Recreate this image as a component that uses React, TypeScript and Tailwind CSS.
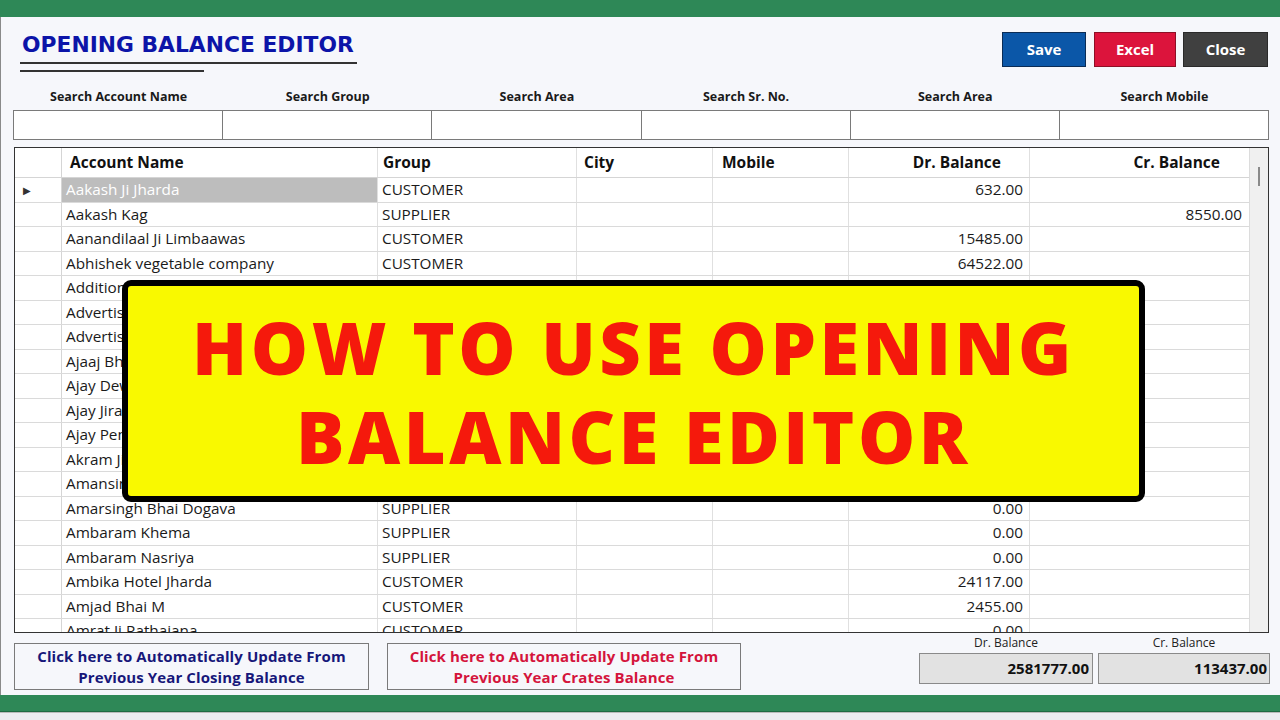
import React from "react";

type Row = {
	name: string;
	group: string;
	dr: string;
	cr: string;
};

const rows: Row[] = [
	{ name: "Aakash Ji Jharda", group: "CUSTOMER", dr: "632.00", cr: "" },
	{ name: "Aakash Kag", group: "SUPPLIER", dr: "", cr: "8550.00" },
	{ name: "Aanandilaal Ji Limbaawas", group: "CUSTOMER", dr: "15485.00", cr: "" },
	{ name: "Abhishek vegetable company", group: "CUSTOMER", dr: "64522.00", cr: "" },
	{ name: "Additional Charges", group: "EXPENSES", dr: "0.00", cr: "" },
	{ name: "Advertisement", group: "EXPENSES", dr: "0.00", cr: "" },
	{ name: "Advertising Exp", group: "EXPENSES", dr: "0.00", cr: "" },
	{ name: "Ajaaj Bhai", group: "CUSTOMER", dr: "0.00", cr: "" },
	{ name: "Ajay Dewasi", group: "CUSTOMER", dr: "0.00", cr: "" },
	{ name: "Ajay Jirawala", group: "CUSTOMER", dr: "0.00", cr: "" },
	{ name: "Ajay Pemawat", group: "CUSTOMER", dr: "0.00", cr: "" },
	{ name: "Akram Ji", group: "SUPPLIER", dr: "0.00", cr: "" },
	{ name: "Amansingh", group: "SUPPLIER", dr: "0.00", cr: "" },
	{ name: "Amarsingh Bhai Dogava", group: "SUPPLIER", dr: "0.00", cr: "" },
	{ name: "Ambaram Khema", group: "SUPPLIER", dr: "0.00", cr: "" },
	{ name: "Ambaram Nasriya", group: "SUPPLIER", dr: "0.00", cr: "" },
	{ name: "Ambika Hotel Jharda", group: "CUSTOMER", dr: "24117.00", cr: "" },
	{ name: "Amjad Bhai M", group: "CUSTOMER", dr: "2455.00", cr: "" },
	{ name: "Amrat Ji Rathajana", group: "CUSTOMER", dr: "0.00", cr: "" },
];

const searches = [
	"Search Account Name",
	"Search Group",
	"Search Area",
	"Search Sr. No.",
	"Search Area",
	"Search Mobile",
];

const cols = "grid grid-cols-[47px_316px_199px_136px_136px_181px_218px]";

export default function App() {
	return (
		<div className="relative w-[1280px] h-[720px] overflow-hidden flex flex-col bg-[#f6f7fb] font-['Open_Sans',sans-serif] text-[#111]">
			<div className="h-[17px] bg-[#2e8857] shrink-0" />

			<div className="flex-1 flex flex-col border-l border-[#8a8a8a] pl-[13px] pr-[10px]">
				{/* header */}
				<div className="flex justify-between items-start h-[70px] pr-[2px]">
					<div className="pl-[8px] pt-[15px]">
						<h1 className="font-['DejaVu_Sans',sans-serif] font-bold text-[21.8px] leading-[26px] text-[#0c14a8]">
							OPENING BALANCE EDITOR
						</h1>
						<div className="mt-[4px] -ml-[2px] w-[337px] h-[1.5px] bg-[#333]" />
						<div className="mt-[6.5px] -ml-[2px] w-[184px] h-[1.5px] bg-[#333]" />
					</div>
					<div className="flex pt-[15px]">
						<button className="w-[84px] h-[35px] bg-[#0b57a8] border border-[#0a2c55] text-white font-bold text-[15px]">
							Save
						</button>
						<button className="ml-[8px] w-[82px] h-[35px] bg-[#dc143c] border border-[#8d1026] text-white font-bold text-[15px]">
							Excel
						</button>
						<button className="ml-[7px] w-[85px] h-[35px] bg-[#404040] border border-[#2a2a2a] text-white font-bold text-[15px]">
							Close
						</button>
					</div>
				</div>

				{/* search */}
				<div className="grid grid-cols-6 w-[1255px]">
					{searches.map((s, i) => (
						<div key={i} className="flex flex-col">
							<div className="h-[23px] text-center font-bold text-[12.5px] leading-[19px] text-[#1a1a1a]">
								{s}
							</div>
							<div className="h-[30px] bg-white border border-[#7a7a7a] -ml-px first:ml-0" />
						</div>
					))}
				</div>

				{/* table */}
				<div className="mt-[7px] w-[1255px] h-[486px] shrink-0 border border-[#333] bg-white flex overflow-hidden">
					<div className="flex-1 flex flex-col overflow-hidden">
						<div className={`${cols} h-[30px] shrink-0 border-b border-[#d5d5d5] font-bold text-[15.5px] text-[#111]`}>
							<div className="border-r border-[#d5d5d5]" />
							<div className="pl-[8px] flex items-center border-r border-[#e0e0e0]">Account Name</div>
							<div className="pl-[5px] flex items-center border-r border-[#e0e0e0]">Group</div>
							<div className="pl-[7px] flex items-center border-r border-[#e0e0e0]">City</div>
							<div className="pl-[9px] flex items-center border-r border-[#e0e0e0]">Mobile</div>
							<div className="pr-[28px] flex items-center justify-end border-r border-[#e0e0e0]">Dr. Balance</div>
							<div className="pr-[28px] flex items-center justify-end">Cr. Balance</div>
						</div>
						{rows.map((r, i) => (
							<div key={i} className={`${cols} h-[24.5px] shrink-0 border-b border-[#dadada] text-[15.3px] leading-[23px] text-[#1a1a1a]`}>
								<div className="border-r border-[#d5d5d5] flex items-center pl-[8px]">
									{i === 0 && <span className="text-[10px] leading-none text-[#333]">▶</span>}
								</div>
								<div className={`pl-[4px] border-r border-[#e0e0e0] whitespace-nowrap overflow-hidden ${i === 0 ? "bg-[#bdbdbd] text-white" : ""}`}>
									{r.name}
								</div>
								<div className="pl-[4px] border-r border-[#e0e0e0]">{r.group}</div>
								<div className="border-r border-[#e0e0e0]" />
								<div className="border-r border-[#e0e0e0]" />
								<div className="pr-[6px] text-right border-r border-[#e0e0e0]">{r.dr}</div>
								<div className="pr-[6px] text-right">{r.cr}</div>
							</div>
						))}
					</div>
					<div className="w-[19px] shrink-0 bg-[#f0f0f0] border-l border-[#dcdcdc] pt-[19px] flex justify-center">
						<div className="w-[2px] h-[19px] bg-[#8a8a8a]" />
					</div>
				</div>

				{/* bottom */}
				<div className="mt-[10px] flex items-start">
					<button className="shrink-0 w-[355px] h-[47px] border border-[#7a7a7a] text-[#17177a] font-bold text-[15px] leading-[21px] tracking-[0.1px]">
						Click here to Automatically Update From
						<br />
						Previous Year Closing Balance
					</button>
					<button className="shrink-0 ml-[18px] w-[354px] h-[47px] border border-[#7a7a7a] text-[#d4143c] font-bold text-[15px] leading-[21px] tracking-[0.1px]">
						Click here to Automatically Update From
						<br />
						Previous Year Crates Balance
					</button>
					<div className="shrink-0 ml-[178px] -mt-[5px] flex gap-[5px]">
						<div className="flex flex-col">
							<div className="h-[15px] text-center text-[12px] leading-[10px] text-[#222]">Dr. Balance</div>
							<div className="w-[174px] h-[31px] bg-[#e2e2e2] border border-[#8a8a8a] text-right pr-[3px] font-bold text-[15px] leading-[29px]">
								2581777.00
							</div>
						</div>
						<div className="flex flex-col">
							<div className="h-[15px] text-center text-[12px] leading-[10px] text-[#222]">Cr. Balance</div>
							<div className="w-[172px] h-[31px] bg-[#e2e2e2] border border-[#8a8a8a] text-right pr-[2px] font-bold text-[15px] leading-[29px]">
								113437.00
							</div>
						</div>
					</div>
				</div>
			</div>

			<div className="h-[17px] bg-[#2e8857] shrink-0 border-b border-[#1f6b42]" />
			<div className="h-[8px] bg-[#ecedf0] shrink-0 border-t border-[#bbb]" />

			{/* thumbnail banner */}
			<div className="absolute left-[122px] top-[280px] w-[1023px] h-[222px] bg-[#f9f900] border-[6px] border-black rounded-[9px] flex flex-col items-center justify-center">
				<div className="font-['Open_Sans',sans-serif] font-extrabold text-[#f5190c] text-[72px] leading-[89px] text-center tracking-[3.5px] pt-[2px]">
					HOW TO USE OPENING
					<br />
					BALANCE EDITOR
				</div>
			</div>
		</div>
	);
}
